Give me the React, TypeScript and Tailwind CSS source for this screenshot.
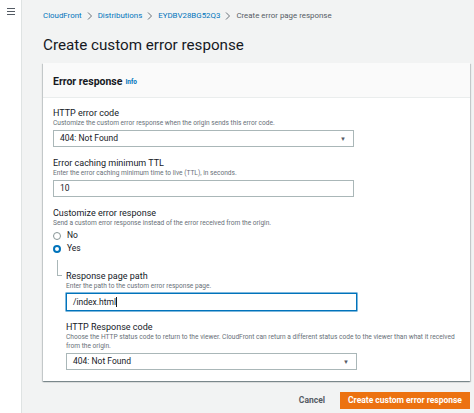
import React from 'react';

const font = { fontFamily: 'Roboto, "Open Sans", sans-serif' };

function Chevron() {
  return (
    <svg width="6" height="8" viewBox="0 0 6 8" className="mx-[5px]">
      <path d="M1 0.5 L4.5 4 L1 7.5" fill="none" stroke="#687078" strokeWidth="1" />
    </svg>
  );
}

function Field({ label, desc, children }: { label: string; desc: React.ReactNode; children: React.ReactNode }) {
  return (
    <div>
      <div className="text-[9px] leading-[12px] text-[#16191f]">{label}</div>
      <div className="text-[6.6px] leading-[9px] text-[#687078]">{desc}</div>
      <div className="mt-[2px]">{children}</div>
    </div>
  );
}

function Select({ value, width }: { value: string; width: string }) {
  return (
    <div className={`${width} h-[17px] border border-[#aab7b8] bg-white flex items-center justify-between pl-[6px] pr-[7px]`}>
      <span className="text-[8.5px] text-[#16191f]">{value}</span>
      <span className="text-[6px] text-[#545b64]">▼</span>
    </div>
  );
}

export default function App() {
  return (
    <div className="w-[474px] h-[413px] flex bg-[#f2f3f3] overflow-hidden" style={font}>
      {/* Side nav */}
      <div className="w-[22px] shrink-0 bg-white border-r border-[#dfe3e3] flex justify-center pt-[8px]">
        <svg width="8" height="7" viewBox="0 0 8 7">
          <path d="M0 0.5 H8 M0 3.5 H8 M0 6.5 H8" stroke="#545b64" strokeWidth="1" />
        </svg>
      </div>

      <div className="flex-1 pl-[21px] pr-[4px]">
        {/* Breadcrumb */}
        <div className="flex items-center mt-[10px] h-[12px] text-[7.9px]">
          <span className="text-[#0073bb]">CloudFront</span>
          <Chevron />
          <span className="text-[#0073bb]">Distributions</span>
          <Chevron />
          <span className="text-[#0073bb]">EYDBV28BG52Q3</span>
          <Chevron />
          <span className="text-[#545b64]">Create error page response</span>
        </div>

        <h1 className="mt-[12px] text-[15.2px] leading-[22px] text-[#16191f]">Create custom error response</h1>

        {/* Card */}
        <div className="mt-[7px] bg-white shadow-[0_1px_1px_rgba(0,28,36,0.3),1px_1px_1px_rgba(0,28,36,0.15),-1px_1px_1px_rgba(0,28,36,0.15)]">
          <div className="h-[35px] bg-[#fafafa] border-b border-[#eaeded] flex items-center px-[10px] pt-[3px]">
            <span className="text-[10.5px] font-bold text-[#16191f]">Error response</span>
            <span className="ml-[3px] mt-[2px] text-[6.5px] font-bold text-[#0073bb]">Info</span>
          </div>

          <div className="px-[10px] pt-[9px] pb-[11px] flex flex-col gap-[10px]">
            <Field label="HTTP error code" desc="Customize the custom error response when the origin sends this error code.">
              <Select value="404: Not Found" width="w-[301px]" />
            </Field>

            <Field label="Error caching minimum TTL" desc="Enter the error caching minimum time to live (TTL), in seconds.">
              <div className="w-[301px] h-[17px] border border-[#aab7b8] bg-white flex items-center pl-[6px] text-[8.5px] text-[#16191f]">10</div>
            </Field>

            <div>
              <div className="text-[9px] leading-[12px] text-[#16191f]">Customize error response</div>
              <div className="text-[6.6px] leading-[9px] text-[#687078]">Send a custom error response instead of the error received from the origin.</div>
              <div className="mt-[1px] flex items-center h-[13px]">
                <span className="w-[8px] h-[8px] rounded-full border border-[#879596] bg-white" />
                <span className="ml-[6px] text-[8.5px] text-[#16191f]">No</span>
              </div>
              <div className="flex items-center h-[13px]">
                <span className="w-[8px] h-[8px] rounded-full border-[2.5px] border-[#0073bb] bg-white" />
                <span className="ml-[6px] text-[8.5px] text-[#16191f]">Yes</span>
              </div>

              <div className="flex">
                <div className="w-[13px] shrink-0 pl-[3.5px] pt-[5px]">
                  <div className="w-[5px] h-[16px] border-l border-b border-[#aab7b8]" />
                </div>
                <div className="flex flex-col gap-[10px] pt-[15px]">
                  <Field label="Response page path" desc="Enter the path to the custom error response page.">
                    <div className="w-[291px] h-[18px] border border-[#0073bb] shadow-[0_0_0_0.5px_#0073bb] bg-white flex items-center pl-[6px] text-[8.5px] text-[#16191f]">
                      /index.html<span className="w-[0.5px] h-[10px] bg-[#16191f]" />
                    </div>
                  </Field>
                  <Field
                    label="HTTP Response code"
                    desc={<span className="block w-[392px]">Choose the HTTP status code to return to the viewer. CloudFront can return a different status code to the viewer than what it received from the origin.</span>}
                  >
                    <Select value="404: Not Found" width="w-[291px]" />
                  </Field>
                </div>
              </div>
            </div>
          </div>
        </div>

        {/* Actions */}
        <div className="flex items-center justify-end mt-[11px]">
          <span className="text-[8.5px] font-bold text-[#545b64]">Cancel</span>
          <div className="ml-[15px] w-[130px] h-[17px] bg-[#ec7211] flex items-center justify-center text-[8.5px] font-bold text-white">
            Create custom error response
          </div>
        </div>
      </div>
    </div>
  );
}
